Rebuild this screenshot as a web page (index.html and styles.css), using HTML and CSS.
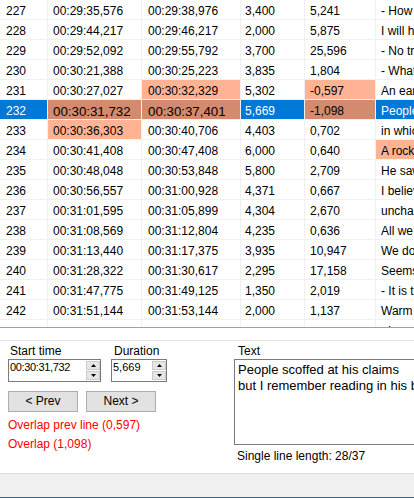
FILE: index.html
```html
<!DOCTYPE html>
<html>
<head>
<meta charset="utf-8">
<title>Subtitle editor</title>
<link rel="stylesheet" href="styles.css">
</head>
<body>
<div class="grid">
  <div class="row"><div class="cell num">227</div><div class="cell">00:29:35,576</div><div class="cell c3">00:29:38,976</div><div class="cell c4">3,400</div><div class="cell">5,241</div><div class="cell">- How did he</div></div>
  <div class="row"><div class="cell num">228</div><div class="cell">00:29:44,217</div><div class="cell c3">00:29:46,217</div><div class="cell c4">2,000</div><div class="cell">5,875</div><div class="cell">I will help</div></div>
  <div class="row"><div class="cell num">229</div><div class="cell">00:29:52,092</div><div class="cell c3">00:29:55,792</div><div class="cell c4">3,700</div><div class="cell">25,596</div><div class="cell">- No trace</div></div>
  <div class="row"><div class="cell num">230</div><div class="cell">00:30:21,388</div><div class="cell c3">00:30:25,223</div><div class="cell c4">3,835</div><div class="cell">1,804</div><div class="cell">- What</div></div>
  <div class="row"><div class="cell num">231</div><div class="cell">00:30:27,027</div><div class="cell c3 warn">00:30:32,329</div><div class="cell c4">5,302</div><div class="cell warn">-0,597</div><div class="cell">An early</div></div>
  <div class="row sel"><div class="cell num blue">232</div><div class="cell big err">00:30:31,732</div><div class="cell c3 big err">00:30:37,401</div><div class="cell c4 blue">5,669</div><div class="cell err">-1,098</div><div class="cell blue">People scoffed</div></div>
  <div class="row"><div class="cell num">233</div><div class="cell warn">00:30:36,303</div><div class="cell c3">00:30:40,706</div><div class="cell c4">4,403</div><div class="cell">0,702</div><div class="cell">in which</div></div>
  <div class="row"><div class="cell num">234</div><div class="cell">00:30:41,408</div><div class="cell c3">00:30:47,408</div><div class="cell c4">6,000</div><div class="cell">0,640</div><div class="cell warn">A rock</div></div>
  <div class="row"><div class="cell num">235</div><div class="cell">00:30:48,048</div><div class="cell c3">00:30:53,848</div><div class="cell c4">5,800</div><div class="cell">2,709</div><div class="cell">He saw</div></div>
  <div class="row"><div class="cell num">236</div><div class="cell">00:30:56,557</div><div class="cell c3">00:31:00,928</div><div class="cell c4">4,371</div><div class="cell">0,667</div><div class="cell">I believe</div></div>
  <div class="row"><div class="cell num">237</div><div class="cell">00:31:01,595</div><div class="cell c3">00:31:05,899</div><div class="cell c4">4,304</div><div class="cell">2,670</div><div class="cell">unchanged</div></div>
  <div class="row"><div class="cell num">238</div><div class="cell">00:31:08,569</div><div class="cell c3">00:31:12,804</div><div class="cell c4">4,235</div><div class="cell">0,636</div><div class="cell">All we</div></div>
  <div class="row"><div class="cell num">239</div><div class="cell">00:31:13,440</div><div class="cell c3">00:31:17,375</div><div class="cell c4">3,935</div><div class="cell">10,947</div><div class="cell">We don't</div></div>
  <div class="row"><div class="cell num">240</div><div class="cell">00:31:28,322</div><div class="cell c3">00:31:30,617</div><div class="cell c4">2,295</div><div class="cell">17,158</div><div class="cell">Seems</div></div>
  <div class="row"><div class="cell num">241</div><div class="cell">00:31:47,775</div><div class="cell c3">00:31:49,125</div><div class="cell c4">1,350</div><div class="cell">2,019</div><div class="cell">- It is time</div></div>
  <div class="row"><div class="cell num">242</div><div class="cell">00:31:51,144</div><div class="cell c3">00:31:53,144</div><div class="cell c4">2,000</div><div class="cell">1,137</div><div class="cell">Warm</div></div>
  <div class="row"><div class="cell num"></div><div class="cell"></div><div class="cell c3"></div><div class="cell c4"></div><div class="cell"></div><div class="cell">- in</div></div>
</div>
<div class="spacer"></div>
<div class="panel">
  <div class="left">
    <div class="fields">
      <div class="field start">
        <div class="lbl">Start time</div>
        <div class="spin"><div class="val">00:30:31,732</div><div class="arrows"><span><svg width="5" height="3" viewBox="0 0 5 3"><path d="M0 3 L2.5 0 L5 3 Z" fill="#000"/></svg></span><span><svg width="5" height="3" viewBox="0 0 5 3"><path d="M0 0 L5 0 L2.5 3 Z" fill="#000"/></svg></span></div></div>
      </div>
      <div class="field dur">
        <div class="lbl">Duration</div>
        <div class="spin"><div class="val">5,669</div><div class="arrows"><span><svg width="5" height="3" viewBox="0 0 5 3"><path d="M0 3 L2.5 0 L5 3 Z" fill="#000"/></svg></span><span><svg width="5" height="3" viewBox="0 0 5 3"><path d="M0 0 L5 0 L2.5 3 Z" fill="#000"/></svg></span></div></div>
      </div>
    </div>
    <div class="buttons">
      <div class="btn">&lt; Prev</div>
      <div class="btn">Next &gt;</div>
    </div>
    <div class="msgs">
      <div>Overlap prev line (0,597)</div>
      <div>Overlap (1,098)</div>
    </div>
  </div>
  <div class="right">
    <div class="lbl text-lbl">Text</div>
    <div class="textbox">People scoffed at his claims
but I remember reading in his books</div>
    <div class="len">Single line length: 28/37</div>
  </div>
</div>
<div class="status"></div>
</body>
</html>
```

FILE: styles.css
```css
body {
  margin: 0;
  width: 414px;
  height: 498px;
  overflow: hidden;
  background: #fff;
  font-family: "Liberation Sans", Arial, sans-serif;
  color: #000;
}

.grid {
  width: 414px;
  height: 327px;
  overflow: hidden;
  border-bottom: 1px solid #a0a0a0;
}

.row {
  display: grid;
  grid-template-columns: 48px 94px 99px 64px 71px 160px;
  height: 20px;
}

.cell {
  box-sizing: border-box;
  height: 20px;
  border-right: 1px solid #f0f0f0;
  border-bottom: 1px solid #f0f0f0;
  padding: 4px 0 0 5px;
  font-size: 12px;
  line-height: 15px;
  white-space: nowrap;
  overflow: hidden;
}

.cell.num { padding-left: 6px; }
.cell.c3 { padding-left: 6px; }
.cell.c4 { padding-left: 4px; }

.cell.warn { background: #ffb394; }
.cell.err { background: #d48a6e; }
.cell.blue { background: #0078d7; color: #fff; }
.cell.big { font-size: 13.3px; }

.spacer {
  height: 12px;
  border-bottom: 1px solid #e3e3e3;
}

.panel {
  display: flex;
  height: 132px;
  overflow: hidden;
}

.left {
  flex: none;
  width: 234px;
  box-sizing: border-box;
  padding-left: 8px;
}

.fields {
  display: flex;
  gap: 10px;
  margin-top: 3px;
}

.lbl {
  font-size: 12px;
  line-height: 14px;
  padding-left: 2px;
}

.dur .lbl { padding-left: 3px; }

.spin {
  margin-top: 1px;
  display: flex;
  box-sizing: border-box;
  height: 23px;
  border: 1px solid #7a7a7a;
  background: #fff;
}

.start .spin { width: 93px; }
.dur .spin { width: 56px; }

.val {
  flex: 1;
  font-size: 11px;
  line-height: 13px;
  padding: 1px 0 0 1px;
  white-space: nowrap;
  overflow: hidden;
}

.start .val { letter-spacing: -0.35px; }

.arrows {
  flex: none;
  width: 14px;
  display: flex;
  flex-direction: column;
  gap: 1px;
  margin-top: 1px;
}

.arrows span {
  box-sizing: border-box;
  height: 9px;
  background: #e6e6e6;
  border: 1px solid #cacaca;
  display: flex;
  align-items: center;
  justify-content: center;
}

.buttons {
  display: flex;
  gap: 8px;
  margin-top: 9px;
}

.btn {
  box-sizing: border-box;
  width: 70px;
  height: 21px;
  border: 1px solid #adadad;
  background: #e1e1e1;
  font-size: 12px;
  line-height: 19px;
  text-align: center;
}

.msgs {
  margin-top: 4px;
  color: #f00;
  font-size: 12px;
  line-height: 19px;
}

.right {
  flex: none;
  width: 200px;
}

.text-lbl { margin-top: 3px; padding-left: 4px; }

.textbox {
  margin-top: 1px;
  box-sizing: border-box;
  height: 86px;
  border: 1px solid #7a7a7a;
  border-right: none;
  padding: 2px 0 0 3px;
  font-size: 13px;
  line-height: 16px;
  white-space: pre;
  overflow: hidden;
}

.len {
  margin-top: 2px;
  padding-left: 3px;
  font-size: 12px;
  line-height: 18px;
}

.status {
  box-sizing: border-box;
  height: 25px;
  background: #f0f0f0;
  border-top: 1px solid #dadada;
  border-bottom: 1px solid #0078d7;
}
```
